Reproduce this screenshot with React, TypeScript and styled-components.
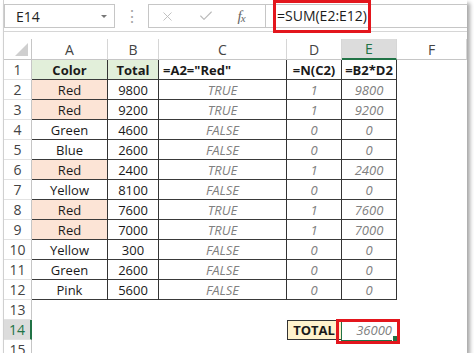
import React from "react";
import styled, { createGlobalStyle, css } from "styled-components";
import { X, Check } from "lucide-react";

const GREEN_FILL = "#e2efda";
const PEACH_FILL = "#fce4d6";
const CREAM_FILL = "#fff2cc";
const EXCEL_GREEN = "#217346";
const NOTE_RED = "#e3161d";

type Align = "left" | "center" | "right";

type CellSpec = {
  text?: string;
  fill?: string;
  bold?: boolean;
  muted?: boolean;
  align?: Align;
  edge?: boolean;
  boxed?: boolean;
  selected?: boolean;
};

const records: [string, number][] = [
  ["Red", 9800],
  ["Red", 9200],
  ["Green", 4600],
  ["Blue", 2600],
  ["Red", 2400],
  ["Yellow", 8100],
  ["Red", 7600],
  ["Red", 7000],
  ["Yellow", 300],
  ["Green", 2600],
  ["Pink", 5600],
];

const total = records.reduce((s, [c, n]) => (c === "Red" ? s + n : s), 0);

const letters = ["A", "B", "C", "D", "E", "F"];

function buildRow(r: number): CellSpec[] {
  if (r === 1) {
    return [
      { text: "Color", bold: true, fill: GREEN_FILL, edge: true },
      { text: "Total", bold: true, fill: GREEN_FILL, edge: true },
      { text: '=A2="Red"', bold: true, align: "left", edge: true },
      { text: "=N(C2)", bold: true, edge: true },
      { text: "=B2*D2", bold: true, edge: true },
      {},
    ];
  }
  const rec = records[r - 2];
  if (rec) {
    const [color, amount] = rec;
    const isRed = color === "Red";
    return [
      { text: color, fill: isRed ? PEACH_FILL : undefined, edge: true },
      { text: String(amount), edge: true },
      { text: isRed ? "TRUE" : "FALSE", muted: true, edge: true },
      { text: isRed ? "1" : "0", muted: true, edge: true },
      { text: isRed ? String(amount) : "0", muted: true, edge: true },
      {},
    ];
  }
  if (r === 14) {
    return [
      {},
      {},
      {},
      { text: "TOTAL", bold: true, fill: CREAM_FILL, boxed: true },
      { text: String(total), muted: true, align: "right", selected: true },
      {},
    ];
  }
  return [{}, {}, {}, {}, {}, {}];
}

const GlobalStyle = createGlobalStyle`
  html, body {
    margin: 0;
    background: #fff;
  }
  body {
    font-family: "Open Sans", "Liberation Sans", sans-serif;
  }
`;

const Window = styled.div`
  width: 463px;
  height: 353px;
  margin-left: 3px;
  border-left: 1px solid #d0d0d0;
  box-shadow: 3px 3px 4px rgba(0, 0, 0, 0.35);
  overflow: hidden;
  background: #fff;
`;

const Toolbar = styled.div`
  display: flex;
  align-items: flex-start;
  height: 32px;
  padding-top: 4px;
  box-sizing: border-box;
  border-bottom: 1px solid #d6d6d6;
`;

const NameBox = styled.div`
  width: 111px;
  height: 24px;
  box-sizing: border-box;
  border: 1px solid #c6c6c6;
  display: flex;
  align-items: center;
  justify-content: space-between;
  padding: 0 7px 0 11px;
  font-size: 14px;
  color: #222;
`;

const Caret = styled.span`
  width: 0;
  height: 0;
  border-left: 3px solid transparent;
  border-right: 3px solid transparent;
  border-top: 3px solid #777;
`;

const Grip = styled.div`
  width: 33px;
  height: 24px;
  display: flex;
  align-items: center;
  justify-content: center;
  font-size: 16px;
  color: #a6a6a6;
`;

const Actions = styled.div`
  width: 117px;
  height: 24px;
  box-sizing: border-box;
  border: 1px solid #c6c6c6;
  border-right: none;
  display: flex;
  align-items: center;
`;

const Slot = styled.div<{ $w: number }>`
  width: ${(p) => p.$w}px;
  display: flex;
  justify-content: center;
  align-items: center;
  color: #b9b9b9;
`;

const Fx = styled.span`
  font-family: "Liberation Serif", "DejaVu Serif", serif;
  font-style: italic;
  font-size: 15px;
  color: #666;
  letter-spacing: -1px;

  sub {
    font-size: 11px;
    vertical-align: -1px;
  }
`;

const Input = styled.div`
  flex: 1;
  height: 24px;
  box-sizing: border-box;
  border: 1px solid #c6c6c6;
  border-right: none;
  display: flex;
  align-items: center;
  padding-left: 11px;
  font-size: 14px;
  color: #1c1c1c;
`;

const Formula = styled.span`
  position: relative;
  display: inline-block;
  line-height: 20px;

  &::after {
    content: "";
    position: absolute;
    left: -4px;
    right: -4px;
    top: -6px;
    bottom: -7px;
    border: 3px solid ${NOTE_RED};
  }
`;

const Sheet = styled.div`
  margin-top: 7px;
  display: grid;
  grid-template-columns: 28px 76px 51px 128px 55px 55px 1fr;
  grid-template-rows: 21px;
  grid-auto-rows: 20px;
`;

const Corner = styled.div`
  display: flex;
  align-items: flex-end;
  justify-content: flex-end;
  padding: 0 3px 3px 0;
  box-sizing: border-box;
  border-right: 1px solid #c6c6c6;
  border-bottom: 1px solid #c6c6c6;
`;

const ColHead = styled.div<{ $active?: boolean }>`
  display: flex;
  align-items: center;
  justify-content: center;
  box-sizing: border-box;
  font-size: 14px;
  color: ${(p) => (p.$active ? EXCEL_GREEN : "#444")};
  background: ${(p) => (p.$active ? "#dcdcdc" : "#fff")};
  border-right: 1px solid #d6d6d6;
  border-bottom: ${(p) => (p.$active ? `2px solid ${EXCEL_GREEN}` : "1px solid #c6c6c6")};
`;

const RowHead = styled.div<{ $active?: boolean }>`
  display: flex;
  align-items: center;
  justify-content: center;
  box-sizing: border-box;
  font-size: 14px;
  color: ${(p) => (p.$active ? EXCEL_GREEN : "#444")};
  background: ${(p) => (p.$active ? "#dcdcdc" : "#fff")};
  border-right: ${(p) => (p.$active ? `2px solid ${EXCEL_GREEN}` : "1px solid #c6c6c6")};
  border-bottom: 1px solid #e2e2e2;
`;

const Cell = styled.div<{
  $fill?: string;
  $bold?: boolean;
  $muted?: boolean;
  $align?: Align;
  $edge?: boolean;
  $boxed?: boolean;
  $selected?: boolean;
}>`
  display: flex;
  align-items: center;
  justify-content: ${(p) =>
    p.$align === "left" ? "flex-start" : p.$align === "right" ? "flex-end" : "center"};
  padding: 0 4px;
  box-sizing: border-box;
  white-space: nowrap;
  background: ${(p) => p.$fill ?? "#fff"};
  font-size: 13px;
  font-weight: ${(p) => (p.$bold ? 700 : 400)};
  font-style: ${(p) => (p.$muted ? "italic" : "normal")};
  color: ${(p) => (p.$muted ? "#808080" : "#1a1a1a")};
  border-right: 1px solid ${(p) => (p.$edge ? "#333" : "transparent")};
  border-bottom: 1px solid ${(p) => (p.$edge ? "#3a3a3a" : "transparent")};

  ${(p) =>
    p.$boxed &&
    css`
      outline: 1px solid #333;
      outline-offset: -1px;
    `}

  ${(p) =>
    p.$selected &&
    css`
      position: relative;
      z-index: 1;
      box-shadow: 0 0 0 1px ${EXCEL_GREEN};

      &::before {
        content: "";
        position: absolute;
        right: -3px;
        bottom: -3px;
        width: 5px;
        height: 5px;
        background: ${EXCEL_GREEN};
        border: 1px solid #fff;
      }

      &::after {
        content: "";
        position: absolute;
        left: -6px;
        right: -4px;
        top: -1px;
        bottom: -5px;
        border: 3px solid ${NOTE_RED};
      }
    `}
`;

const rowNumbers = Array.from({ length: 15 }, (_, i) => i + 1);

export default function App() {
  return (
    <>
      <GlobalStyle />
      <Window>
        <Toolbar>
          <NameBox>
            E14
            <Caret />
          </NameBox>
          <Grip>⋮</Grip>
          <Actions>
            <Slot $w={37}>
              <X size={15} strokeWidth={1.4} />
            </Slot>
            <Slot $w={39}>
              <Check size={16} strokeWidth={1.6} />
            </Slot>
            <Slot $w={32}>
              <Fx>
                f<sub>x</sub>
              </Fx>
            </Slot>
          </Actions>
          <Input>
            <Formula>=SUM(E2:E12)</Formula>
          </Input>
        </Toolbar>

        <Sheet>
          <Corner>
            <svg width="13" height="13" viewBox="0 0 13 13">
              <polygon points="13,0 13,13 0,13" fill="#cfcfcf" />
            </svg>
          </Corner>
          {letters.map((l) => (
            <ColHead key={l} $active={l === "E"}>
              {l}
            </ColHead>
          ))}
          {rowNumbers.map((r) => (
            <React.Fragment key={r}>
              <RowHead $active={r === 14}>{r}</RowHead>
              {buildRow(r).map((c, i) => (
                <Cell
                  key={i}
                  $fill={c.fill}
                  $bold={c.bold}
                  $muted={c.muted}
                  $align={c.align}
                  $edge={c.edge}
                  $boxed={c.boxed}
                  $selected={c.selected}
                >
                  {c.text}
                </Cell>
              ))}
            </React.Fragment>
          ))}
        </Sheet>
      </Window>
    </>
  );
}
